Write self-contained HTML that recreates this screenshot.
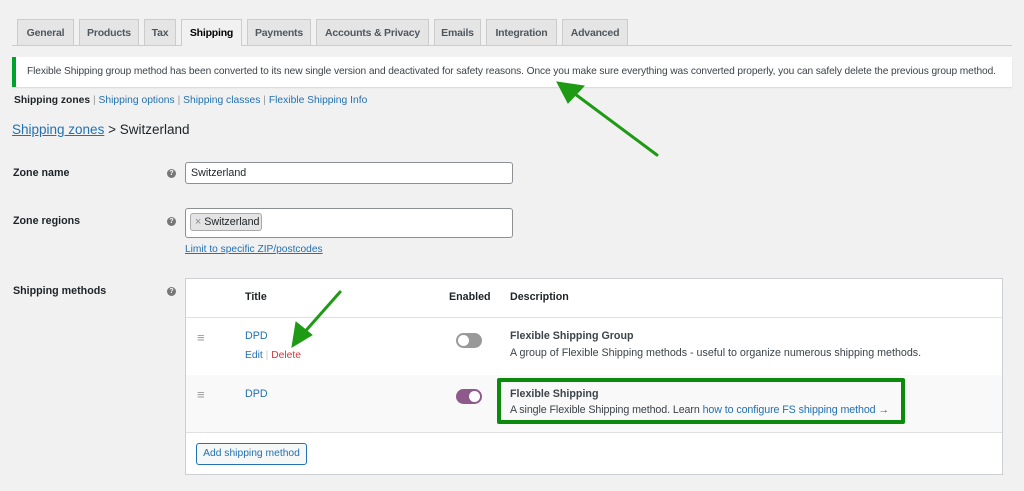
<!DOCTYPE html><html><head><style>
body{margin:0;width:1024px;height:491px;background:#f1f1f1;font-family:"Liberation Sans",sans-serif;font-size:10.7px;color:#1d2327;position:relative;overflow:hidden}
.a{position:absolute;white-space:nowrap}
.tab{position:absolute;top:19px;height:26px;background:#e5e5e5;border:1px solid #ccc;border-bottom:none;line-height:26px;text-align:center;font-weight:bold;color:#50575e;font-size:10.5px;letter-spacing:-0.2px;box-sizing:border-box}
a,.l{color:#2271b1}
.help{position:absolute;width:9px;height:9px;border-radius:50%;background:#777;color:#fff;font-size:7px;text-align:center;line-height:9px;font-weight:bold}
.inp{position:absolute;background:#fff;border:1px solid #8c8f94;border-radius:3px;box-sizing:border-box}
.b{font-weight:bold}
</style></head><body>
<div class="a" style="left:12px;top:45px;width:1000px;border-top:1px solid #ccc"></div>
<div class="tab" style="left:17px;width:57px">General</div>
<div class="tab" style="left:79px;width:60px">Products</div>
<div class="tab" style="left:144px;width:32px">Tax</div>
<div class="tab" style="left:181px;width:61px;background:#f1f1f1;color:#000;height:27px">Shipping</div>
<div class="tab" style="left:247px;width:64px">Payments</div>
<div class="tab" style="left:316px;width:113px">Accounts &amp; Privacy</div>
<div class="tab" style="left:434px;width:47px">Emails</div>
<div class="tab" style="left:486px;width:71px">Integration</div>
<div class="tab" style="left:562px;width:66px">Advanced</div>
<div class="a" style="left:12px;top:57px;width:1000px;height:30px;background:#fff;border-left:4px solid #00a32a;box-sizing:border-box;box-shadow:0 1px 1px rgba(0,0,0,.1);line-height:30px;padding-left:11px;font-size:10.2px;letter-spacing:-0.1px;color:#3c434a;overflow:hidden">Flexible Shipping group method has been converted to its new single version and deactivated for safety reasons. Once you make sure everything was converted properly, you can safely delete the previous group method.</div>
<div class="a" style="left:14px;top:95px;font-size:10.3px"><b>Shipping zones</b> <span style="color:#999">|</span> <span class="l">Shipping options</span> <span style="color:#999">|</span> <span class="l">Shipping classes</span> <span style="color:#999">|</span> <span class="l">Flexible Shipping Info</span></div>
<div class="a" style="left:12px;top:122px;font-size:13.5px"><span class="l" style="text-decoration:underline">Shipping zones</span> &gt; Switzerland</div>
<div class="a b" style="left:13px;top:167px">Zone name</div><div class="help" style="left:167px;top:169px">?</div>
<div class="inp" style="left:185px;top:162px;width:328px;height:22px;line-height:20px;padding-left:5px">Switzerland</div>
<div class="a b" style="left:13px;top:215px">Zone regions</div><div class="help" style="left:167px;top:217px">?</div>
<div class="inp" style="left:185px;top:208px;width:328px;height:30px"></div>
<div class="a" style="left:190px;top:213px;width:72px;height:18px;background:#e4e4e4;border:1px solid #aaa;border-radius:3px;box-sizing:border-box;line-height:16px;padding-left:4px;overflow:hidden"><span style="color:#888">×</span> Switzerland</div>
<div class="a l" style="left:185px;top:244px;text-decoration:underline;font-size:10.2px">Limit to specific ZIP/postcodes</div>
<div class="a b" style="left:13px;top:285px">Shipping methods</div><div class="help" style="left:167px;top:287px">?</div>
<div class="a" style="left:185px;top:278px;width:818px;height:197px;background:#fff;border:1px solid #ccd0d4;box-sizing:border-box"></div>
<div class="a" style="left:186px;top:317px;width:816px;border-top:1px solid #e0e0e0"></div>
<div class="a" style="left:186px;top:375px;width:816px;height:57px;background:#f9f9f9;border-bottom:1px solid #e0e0e0"></div>
<div class="a b" style="left:245px;top:291px">Title</div>
<div class="a b" style="left:449px;top:291px">Enabled</div>
<div class="a b" style="left:510px;top:291px">Description</div>
<div class="a" style="left:197px;top:330px;color:#999;font-size:13px">≡</div>
<div class="a l" style="left:245px;top:330px">DPD</div>
<div class="a" style="left:245px;top:350px;font-size:10.3px"><span class="l">Edit</span> <span style="color:#ccc">|</span> <span style="color:#d63638">Delete</span></div>
<div class="a" style="left:456px;top:333px;width:26px;height:15px;border-radius:8px;background:#999"><div style="position:absolute;left:2px;top:2px;width:11px;height:11px;border-radius:50%;background:#fff"></div></div>
<div class="a b" style="left:510px;top:330px;color:#3c434a">Flexible Shipping Group</div>
<div class="a" style="left:510px;top:347px;color:#3c434a">A group of Flexible Shipping methods - useful to organize numerous shipping methods.</div>
<div class="a" style="left:197px;top:387px;color:#999;font-size:13px">≡</div>
<div class="a l" style="left:245px;top:388px">DPD</div>
<div class="a" style="left:456px;top:389px;width:26px;height:15px;border-radius:8px;background:#8e5a8c"><div style="position:absolute;left:13px;top:2px;width:11px;height:11px;border-radius:50%;background:#fff"></div></div>
<div class="a" style="left:497px;top:378px;width:408px;height:46px;border:4px solid #0b8a0b;box-sizing:border-box;border-radius:2px"></div>
<div class="a b" style="left:510px;top:388px;color:#3c434a">Flexible Shipping</div>
<div class="a" style="left:510px;top:404px;color:#3c434a;letter-spacing:-0.1px">A single Flexible Shipping method. Learn <span class="l">how to configure FS shipping method →</span></div>
<div class="a" style="left:196px;top:443px;width:111px;height:22px;border:1px solid #2271b1;border-radius:3px;background:#f6f7f7;box-sizing:border-box;line-height:20px;text-align:center;color:#2271b1;font-size:10.3px">Add shipping method</div>
<svg class="a" style="left:0;top:0" width="1024" height="491">
<g fill="#1e9a14" stroke="#1e9a14" stroke-linecap="round">
<line x1="657" y1="155" x2="575" y2="94" stroke-width="3"/>
<polygon points="557,82 584,86 568,103"/>
<line x1="340" y1="292" x2="302" y2="335" stroke-width="3"/>
<polygon points="292,347 296,322 312,335"/>
</g></svg>
</body></html>
